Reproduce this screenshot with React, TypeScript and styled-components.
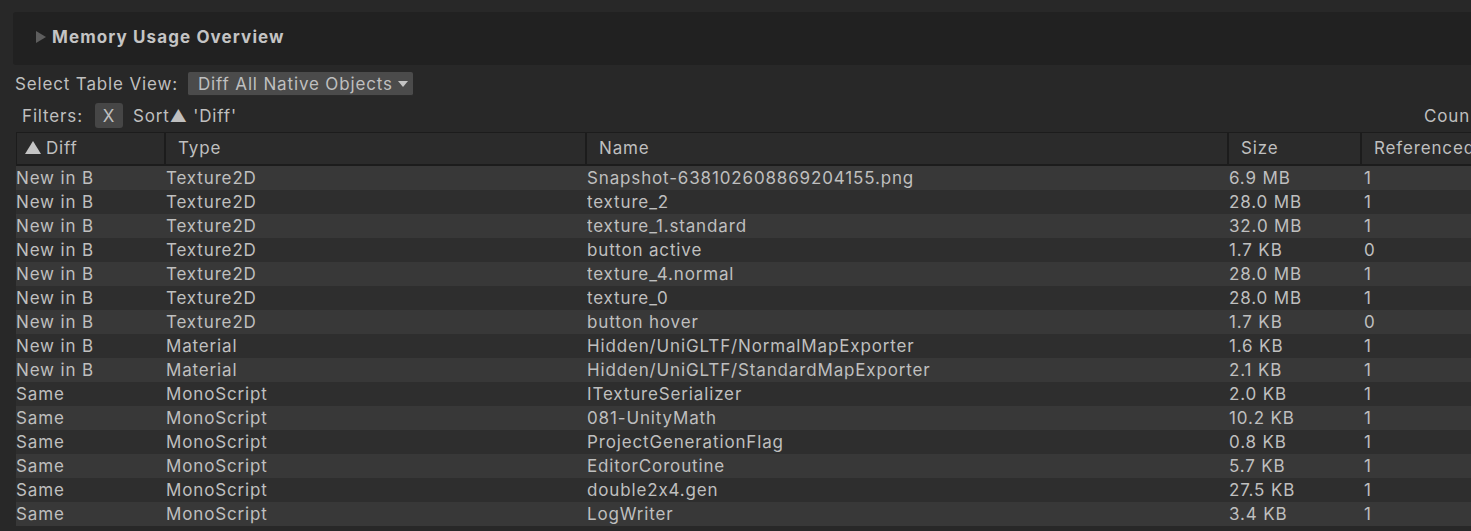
import React from 'react';
import styled, { createGlobalStyle } from 'styled-components';

interface Row {
  diff: string;
  type: string;
  name: string;
  size: string;
  refs: string;
}

const rows: Row[] = [
  { diff: 'New in B', type: 'Texture2D', name: 'Snapshot-638102608869204155.png', size: '6.9 MB', refs: '1' },
  { diff: 'New in B', type: 'Texture2D', name: 'texture_2', size: '28.0 MB', refs: '1' },
  { diff: 'New in B', type: 'Texture2D', name: 'texture_1.standard', size: '32.0 MB', refs: '1' },
  { diff: 'New in B', type: 'Texture2D', name: 'button active', size: '1.7 KB', refs: '0' },
  { diff: 'New in B', type: 'Texture2D', name: 'texture_4.normal', size: '28.0 MB', refs: '1' },
  { diff: 'New in B', type: 'Texture2D', name: 'texture_0', size: '28.0 MB', refs: '1' },
  { diff: 'New in B', type: 'Texture2D', name: 'button hover', size: '1.7 KB', refs: '0' },
  { diff: 'New in B', type: 'Material', name: 'Hidden/UniGLTF/NormalMapExporter', size: '1.6 KB', refs: '1' },
  { diff: 'New in B', type: 'Material', name: 'Hidden/UniGLTF/StandardMapExporter', size: '2.1 KB', refs: '1' },
  { diff: 'Same', type: 'MonoScript', name: 'ITextureSerializer', size: '2.0 KB', refs: '1' },
  { diff: 'Same', type: 'MonoScript', name: '081-UnityMath', size: '10.2 KB', refs: '1' },
  { diff: 'Same', type: 'MonoScript', name: 'ProjectGenerationFlag', size: '0.8 KB', refs: '1' },
  { diff: 'Same', type: 'MonoScript', name: 'EditorCoroutine', size: '5.7 KB', refs: '1' },
  { diff: 'Same', type: 'MonoScript', name: 'double2x4.gen', size: '27.5 KB', refs: '1' },
  { diff: 'Same', type: 'MonoScript', name: 'LogWriter', size: '3.4 KB', refs: '1' },
];

const GlobalStyle = createGlobalStyle`
  html, body {
    margin: 0;
    padding: 0;
    background: #282828;
    height: 531px;
    overflow: hidden;
  }
  body {
    font-family: Inter, "Noto Sans", sans-serif;
    font-feature-settings: 'calt' 0;
    color: #bfbfbf;
    letter-spacing: 0.85px;
  }
`;

const Page = styled.div`
  display: flex;
  flex-direction: column;
  padding-top: 12px;
  width: 1471px;
  overflow: hidden;
`;

const Foldout = styled.div`
  margin-left: 13px;
  height: 53px;
  background: #212121;
  border-radius: 3px 0 0 3px;
  display: flex;
  align-items: center;
  padding-left: 23px;
  padding-bottom: 4px;
  box-sizing: border-box;
  gap: 6px;
`;

const FoldoutArrow = styled.span`
  width: 0;
  height: 0;
  border-top: 6px solid transparent;
  border-bottom: 6px solid transparent;
  border-left: 10px solid #5e5e5e;
  margin-top: 1px;
`;

const FoldoutTitle = styled.span`
  font-size: 17px;
  font-weight: 700;
  color: #c4c4c4;
  letter-spacing: 1.1px;
`;

const ViewRow = styled.div`
  display: flex;
  align-items: center;
  margin-top: 7px;
  padding-left: 15px;
  height: 24px;
  gap: 10px;
`;

const Label = styled.span`
  font-size: 17px;
  white-space: nowrap;
`;

const Dropdown = styled.div`
  width: 225px;
  height: 24px;
  box-sizing: border-box;
  background: #4b4b4b;
  border-bottom: 1px solid #2a2a2a;
  border-radius: 2px;
  display: flex;
  align-items: center;
  justify-content: space-between;
  padding: 0 5px 0 10px;
  font-size: 17px;
  white-space: nowrap;
`;

const DownArrow = styled.span`
  width: 0;
  height: 0;
  border-left: 5px solid transparent;
  border-right: 5px solid transparent;
  border-top: 6px solid #c4c4c4;
`;

const FilterRow = styled.div`
  display: grid;
  grid-template-columns: 1409px auto;
  align-items: center;
  margin-top: 7px;
  padding-left: 15px;
  height: 25px;
`;

const FilterGroup = styled.div`
  display: flex;
  align-items: center;
  padding-left: 7px;
`;

const ClearButton = styled.div`
  width: 28px;
  height: 25px;
  margin-left: 12px;
  margin-right: 10px;
  background: #464646;
  border-radius: 3px;
  display: flex;
  align-items: center;
  justify-content: center;
  font-size: 17px;
`;

const Table = styled.div`
  margin-top: 4px;
  margin-left: 16px;
  width: 1600px;
  display: flex;
  flex-direction: column;
`;

const columns = '150px 421px 642px 133px 1fr';

const HeaderRow = styled.div`
  display: grid;
  grid-template-columns: ${columns};
  height: 31px;
  background: #2b2b2b;
  border-top: 1px solid #1c1c1c;
  border-bottom: 2px solid #1c1c1c;
`;

const HeaderCell = styled.div<{ $first?: boolean }>`
  display: flex;
  align-items: center;
  gap: 5px;
  padding-left: ${(p) => (p.$first ? '8px' : '12px')};
  padding-bottom: 2px;
  border-right: 2px solid #1c1c1c;
  border-left: ${(p) => (p.$first ? '1px solid #1c1c1c' : 'none')};
  font-size: 17px;
  white-space: nowrap;
  overflow: hidden;
`;

const SortArrow = styled.span`
  width: 0;
  height: 0;
  border-left: 8px solid transparent;
  border-right: 8px solid transparent;
  border-bottom: 13px solid #c4c4c4;
`;

const DataRow = styled.div<{ $odd: boolean }>`
  display: grid;
  grid-template-columns: ${columns};
  height: 24px;
  align-items: center;
  background: ${(p) => (p.$odd ? '#383838' : '#2e2e2e')};
`;

const Cell = styled.div`
  font-size: 17px;
  white-space: nowrap;
  overflow: hidden;
`;

const RefCell = styled(Cell)`
  padding-left: 2px;
`;

export default function App() {
  return (
    <>
      <GlobalStyle />
      <Page>
        <Foldout>
          <FoldoutArrow />
          <FoldoutTitle>Memory Usage Overview</FoldoutTitle>
        </Foldout>
        <ViewRow>
          <Label>Select Table View:</Label>
          <Dropdown>
            <span>Diff All Native Objects</span>
            <DownArrow />
          </Dropdown>
        </ViewRow>
        <FilterRow>
          <FilterGroup>
            <Label>Filters:</Label>
            <ClearButton>X</ClearButton>
            <Label>Sort▲ 'Diff'</Label>
          </FilterGroup>
          <Label>Coun</Label>
        </FilterRow>
        <Table>
          <HeaderRow>
            <HeaderCell $first>
              <SortArrow />
              Diff
            </HeaderCell>
            <HeaderCell>Type</HeaderCell>
            <HeaderCell>Name</HeaderCell>
            <HeaderCell>Size</HeaderCell>
            <HeaderCell>Referenced</HeaderCell>
          </HeaderRow>
          {rows.map((r, i) => (
            <DataRow key={i} $odd={i % 2 === 0}>
              <Cell>{r.diff}</Cell>
              <Cell>{r.type}</Cell>
              <Cell>{r.name}</Cell>
              <Cell>{r.size}</Cell>
              <RefCell>{r.refs}</RefCell>
            </DataRow>
          ))}
        </Table>
      </Page>
    </>
  );
}
